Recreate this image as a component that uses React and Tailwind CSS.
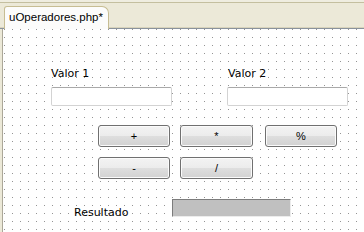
import React from 'react'

const dots =
  '[background-image:linear-gradient(90deg,transparent_1px,#ffffff_1px),linear-gradient(180deg,transparent_1px,#ffffff_1px)] [background-size:8px_8px] [background-position:1px_0px] bg-[#949494]'

function Btn({ label, w = 'w-[72px]' }) {
  return (
    <button
      type="button"
      className={`${w} h-[22px] rounded-[3px] border border-[#707070] bg-[linear-gradient(#f3f3f3_0%,#ececec_48%,#dedede_52%,#d2d2d2_100%)] shadow-[inset_0_0_0_1px_#fbfbfb] text-[11px] leading-[13px] text-black font-['Liberation_Sans',sans-serif] flex items-center justify-center`}
    >
      {label}
    </button>
  )
}

export default function App() {
  return (
    <div className="w-[364px] h-[232px] bg-[#ece9d8] flex flex-col overflow-hidden">
      <div className="h-[2px] bg-[#efede0]" />
      <div className="h-[27px] border-t border-[#c4bf9f] border-b border-b-[#8a929c] shadow-[inset_0_-1px_0_#d8d3bb] flex items-end pl-[4px]">
        <div className="relative -mb-px h-[23px] w-[105px] bg-[#fcfcfb] border-l border-t border-r border-[#c7bd93] rounded-tl-[3px] rounded-tr-[7px] pl-[4px] pt-[4px] text-[11.5px] leading-[13px] text-black font-['Liberation_Sans',sans-serif]">
          uOperadores.php*
        </div>
      </div>
      <div className="flex-1 flex">
        <div className="w-[2px] bg-[#ece9d8]" />
        <div className="w-px bg-[#aca899]" />
        <div className={`flex-1 ${dots} pl-[48px] pt-[38px] font-['DejaVu_Sans',sans-serif] text-[11px] leading-[13px] text-black`}>
          <div className="flex">
            <div className="w-[177px] h-[13px]">Valor 1</div>
            <div className="h-[13px]">Valor 2</div>
          </div>
          <div className="flex gap-[55px] mt-[7px]">
            <input readOnly className="w-[121px] h-[19px] bg-white border border-[#d3d3d3] border-t-[#a9a9a9] rounded-[2px] outline-none" />
            <input readOnly className="w-[121px] h-[19px] bg-white border border-[#d3d3d3] border-t-[#a9a9a9] rounded-[2px] outline-none" />
          </div>
          <div className="ml-[47px] mt-[19px] flex gap-[10px]">
            <Btn label="+" />
            <Btn label="*" w="w-[73px]" />
            <div className="ml-[2px]">
              <Btn label="%" />
            </div>
          </div>
          <div className="ml-[47px] mt-[10px] flex gap-[10px]">
            <Btn label="-" />
            <Btn label="/" w="w-[73px]" />
          </div>
          <div className="ml-[23px] mt-[20px] flex">
            <div className="w-[98px] mt-[7px] h-[13px]">Resultado</div>
            <div className="w-[119px] h-[18px] bg-[#c0c0c0] border border-t-[#7c7c7c] border-l-[#7c7c7c] border-r-[#ececec] border-b-[#ececec]" />
          </div>
        </div>
      </div>
    </div>
  )
}
